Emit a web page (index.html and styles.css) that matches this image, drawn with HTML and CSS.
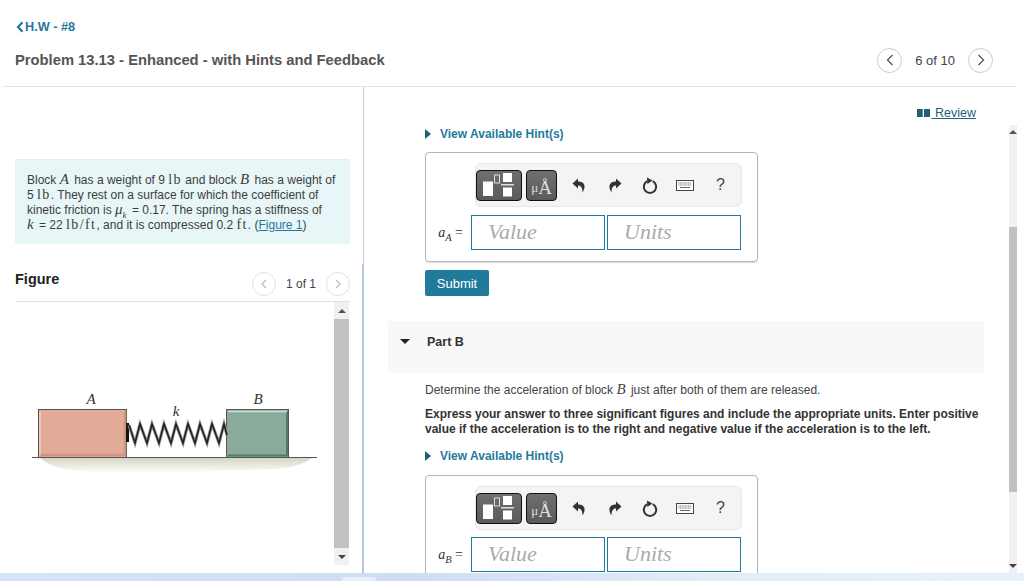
FILE: index.html
```html
<!DOCTYPE html>
<html lang="en">
<head>
<meta charset="utf-8">
<title>Problem 13.13</title>
<link rel="stylesheet" href="styles.css">
</head>
<body>
<div class="page">
  <svg width="0" height="0" class="defs">
    <symbol id="undo" viewBox="0 0 14 15"><path d="M6 0.5 L0.5 5.5 L6 10.500 V7.500 C9 7.500 10.500 9.500 10.500 14.500 C13.800 9.500 13.800 3.500 6 3.500 Z" fill="#333"/></symbol>
    <symbol id="redo" viewBox="0 0 14 15"><path d="M8 0.5 L13.500 5.500 L8 10.500 V7.500 C5 7.500 3.500 9.500 3.500 14.500 C0.200 9.500 0.200 3.500 8 3.500 Z" fill="#333"/></symbol>
    <symbol id="reset" viewBox="0 0 16 17"><path d="M5.300 4.200 A6.200 6.200 0 1 0 10.700 4.200" fill="none" stroke="#333" stroke-width="2"/><path d="M5 0.500 L10.500 3.600 L5.400 7 Z" fill="#333"/></symbol>
    <symbol id="keys" viewBox="0 0 18 11"><rect x=".5" y=".5" width="17" height="10" fill="#fff" stroke="#444"/><path d="M2.500 3h13M2.500 5h13" stroke="#666" stroke-dasharray="1 .6" fill="none"/><path d="M4 7.500h10" stroke="#666" fill="none"/></symbol>
    <symbol id="tmpl" viewBox="0 0 38 24"><rect x="3" y="8.500" width="10" height="14.500" fill="#fff"/><rect x="14.500" y="2" width="5" height="8" fill="none" stroke="#ddd"/><rect x="23" y="0" width="9" height="9" fill="#fff"/><rect x="21" y="11" width="13" height="1.500" fill="#ddd"/><rect x="23" y="14.500" width="9" height="9" fill="#fff"/></symbol>
    <symbol id="back" viewBox="0 0 8 12"><path d="M6.500 1.200 L2 6 L6.500 10.800" fill="none" stroke="#1f7a9c" stroke-width="2.200"/></symbol>
  </svg>

  <header class="top">
    <a class="back"><svg class="chev" width="8" height="12"><use href="#back"/></svg>H.W - #8</a>
    <div class="title-row">
      <h1 class="title">Problem 13.13 - Enhanced - with Hints and Feedback</h1>
      <nav class="pager">
        <span class="circle">
          <svg width="8" height="12" viewBox="0 0 8 12"><path d="M6.500 1 L1.500 6 L6.500 11" fill="none" stroke="#555" stroke-width="1.300"/></svg>
        </span>
        <span class="pager-text">6 of 10</span>
        <span class="circle">
          <svg width="8" height="12" viewBox="0 0 8 12"><path d="M1.500 1 L6.500 6 L1.500 11" fill="none" stroke="#555" stroke-width="1.300"/></svg>
        </span>
      </nav>
    </div>
  </header>

  <main class="main">
    <section class="left">
      <div class="intro">
        Block <i class="m">A</i> has a weight of 9 <span class="u">lb</span> and block <i class="m">B</i> has a weight of<br>
        5 <span class="u">lb</span>. They rest on a surface for which the coefficient of<br>
        kinetic friction is <i class="m">μ<sub>k</sub></i> = 0.17. The spring has a stiffness of<br>
        <i class="m">k</i> = 22 <span class="u">lb/ft</span>, and it is compressed 0.2 <span class="u">ft</span>. (<a class="link">Figure 1</a>)
      </div>
      <div class="fig-head">
        <h2 class="fig-title">Figure</h2>
        <div class="fig-pager">
          <span class="circle small">
            <svg width="7" height="10" viewBox="0 0 7 10"><path d="M6 1 L2 5 L6 9" fill="none" stroke="#bbb" stroke-width="1.200"/></svg>
          </span>
          <span class="fig-count">1 of 1</span>
          <span class="circle small">
            <svg width="7" height="10" viewBox="0 0 7 10"><path d="M1 1 L5 5 L1 9" fill="none" stroke="#bbb" stroke-width="1.200"/></svg>
          </span>
        </div>
      </div>
      <div class="fig-body">
        <div class="fig-canvas">
          <svg class="diagram" width="320" height="100" viewBox="0 0 320 100">
            <defs>
              <linearGradient id="shadow" x1="0" y1="0" x2="0" y2="1"><stop offset="0" stop-color="#d5d5c4"/><stop offset="1" stop-color="#fff"/></linearGradient>
            </defs>
            <path d="M40 75 H312 C296 86 280 87 230 87 C190 91 140 91 100 89 C72 90 50 84 40 75 Z" fill="url(#shadow)"/>
            <rect x="38.500" y="26.500" width="88" height="48" fill="#e1ab98" stroke="#555"/>
            <path d="M40 72 H125 V28" fill="none" stroke="#cf9581" stroke-width="2.500"/>
            <path d="M40 29 V72" fill="none" stroke="#f1d3c8" stroke-width="1.500"/>
            <rect x="226.500" y="26.500" width="62" height="48" fill="#8aaa9c" stroke="#555"/>
            <path d="M228 72.500 H287 V28" fill="none" stroke="#4f7c6c" stroke-width="2"/>
            <path d="M228 28.500 H287" stroke="#cfe0da" stroke-width="1.500"/>
            <path d="M32 74.500 H317" stroke="#555" stroke-width="1"/>
            <rect x="126" y="40" width="3" height="19" fill="#111"/>
            <path d="M129 42 L135 60 L140 41 L147 60 L152 41 L159 60 L164 41 L171 60 L176 41 L183 60 L188 41 L195 60 L200 41 L207 60 L212 41 L219 60 L224 41 L227 52" fill="none" stroke="#999" stroke-width="3.200"/>
            <path d="M129 42 L135 60 L140 41 L147 60 L152 41 L159 60 L164 41 L171 60 L176 41 L183 60 L188 41 L195 60 L200 41 L207 60 L212 41 L219 60 L224 41 L227 52" fill="none" stroke="#222" stroke-width="1.600"/>
            <text class="dlabel" x="91" y="21" text-anchor="middle">A</text>
            <text class="dlabel" x="176" y="33" text-anchor="middle">k</text>
            <text class="dlabel" x="258" y="21" text-anchor="middle">B</text>
          </svg>
        </div>
        <div class="vbar fig-vbar">
          <span class="arrow up"></span>
          <span class="thumb"></span>
          <span class="arrow down"></span>
        </div>
      </div>
    </section>

    <section class="right">
      <div class="right-body">
        <div class="review-row">
          <a class="review">
            <svg class="review-icon" width="13" height="8" viewBox="0 0 13 8"><path d="M0 0H5.700V8H0ZM7 0H13V8H7Z" fill="#1f6078"/></svg>
            <span class="review-text">&nbsp;Review</span>
          </a>
        </div>
        <div class="hint first-hint"><span class="tri"></span>View Available Hint(s)</div>

        <div class="answer">
          <div class="toolbar">
            <span class="tbtn wide"><svg width="38" height="24"><use href="#tmpl"/></svg></span>
            <span class="tbtn narrow">μ<span class="ang">Å</span></span>
            <svg class="ti t1" width="14" height="15"><use href="#undo"/></svg>
            <svg class="ti t2" width="14" height="15"><use href="#redo"/></svg>
            <svg class="ti t3" width="16" height="17"><use href="#reset"/></svg>
            <svg class="ti t4" width="18" height="11"><use href="#keys"/></svg>
            <span class="ti t5">?</span>
          </div>
          <div class="answer-row">
            <span class="var"><i>a<sub>A</sub></i> =</span>
            <span class="field">Value</span>
            <span class="field">Units</span>
          </div>
        </div>
        <button class="submit">Submit</button>

        <div class="part">
          <span class="part-tri"></span>
          <h3 class="part-title">Part B</h3>
        </div>

        <p class="q">Determine the acceleration of block <i class="m">B</i> just after both of them are released.</p>
        <p class="q bold">Express your answer to three significant figures and include the appropriate units. Enter positive value if the acceleration is to the right and negative value if the acceleration is to the left.</p>
        <div class="hint second-hint"><span class="tri"></span>View Available Hint(s)</div>

        <div class="answer">
          <div class="toolbar">
            <span class="tbtn wide"><svg width="38" height="24"><use href="#tmpl"/></svg></span>
            <span class="tbtn narrow">μ<span class="ang">Å</span></span>
            <svg class="ti t1" width="14" height="15"><use href="#undo"/></svg>
            <svg class="ti t2" width="14" height="15"><use href="#redo"/></svg>
            <svg class="ti t3" width="16" height="17"><use href="#reset"/></svg>
            <svg class="ti t4" width="18" height="11"><use href="#keys"/></svg>
            <span class="ti t5">?</span>
          </div>
          <div class="answer-row">
            <span class="var"><i>a<sub>B</sub></i> =</span>
            <span class="field">Value</span>
            <span class="field">Units</span>
          </div>
        </div>
      </div>
      <div class="vbar main-vbar">
        <span class="arrow up"></span>
        <span class="track-top"></span>
        <span class="thumb"></span>
        <span class="track-bottom"></span>
        <span class="arrow down"></span>
      </div>
    </section>
  </main>
  <footer class="strip"><span class="strip-tab"></span></footer>
</div>
</body>
</html>
```
FILE: styles.css
```css
* { box-sizing: border-box; }
html, body { margin: 0; padding: 0; }
body { width: 1024px; height: 581px; overflow: hidden; background: #fff; font-family: "Liberation Sans", Arial, sans-serif; color: #333; }
.page { width: 1024px; height: 581px; display: flex; flex-direction: column; overflow: hidden; }
.defs { display: block; height: 0; }

/* Header */
.top { height: 87px; flex: none; margin: 0 7px 0 3px; padding: 19px 0 0 12px; border-bottom: 1px solid #e1e3e6; }
.back { display: flex; align-items: center; font-size: 12.700px; line-height: 16px; font-weight: bold; color: #1f7a9c; }
.chev { margin: 0 1px 0 1px; }
.title-row { display: flex; justify-content: space-between; align-items: center; margin-top: 8px; height: 34px; }
.title { margin: 0; font-size: 14.750px; line-height: 18px; font-weight: bold; color: #555; }
.pager { display: flex; align-items: center; margin-right: 24px; }
.pager-text { font-size: 13px; color: #444; margin: 0 13px; }
.circle { width: 25px; height: 25px; border: 1px solid #ccc; border-radius: 50%; display: flex; align-items: center; justify-content: center; }
.circle.small { width: 24px; height: 24px; border-color: #e2e2e2; }

/* Main */
.main { flex: 1; min-height: 0; display: flex; }
.left { width: 364px; flex: none; padding: 72px 14px 0 15px; display: flex; flex-direction: column; background: linear-gradient(#c8ccd4, #c8ccd4) right top / 1px 177px no-repeat, linear-gradient(#b4c8e2, #b4c8e2) right bottom / 2px calc(100% - 177px) no-repeat; }
.intro { height: 85px; padding: 13px 12px 0; background: #e8f6f7; border-top: 1px solid #e3eeee; font-size: 12px; line-height: 15px; color: #3d3d3d; white-space: nowrap; }
.m, .u { font-family: "Liberation Serif", serif; font-size: 14px; line-height: 0; }
.m { font-size: 15px; margin-right: 2px; }
.u { letter-spacing: 1.400px; }
.m sub { font-size: 9px; line-height: 0; }
.link { color: #1f7a9c; text-decoration: underline; }
.fig-head { display: flex; justify-content: space-between; align-items: center; height: 58px; padding-top: 13px; border-bottom: 1px solid #dfe1e4; }
.fig-title { margin: 0 0 1px; font-size: 14.500px; font-weight: bold; color: #222; }
.fig-pager { display: flex; align-items: center; margin: 9px 0 0 0; }
.fig-count { font-size: 12px; color: #444; margin: 0 10px; }
.fig-body { flex: 1; min-height: 0; display: flex; justify-content: space-between; padding-bottom: 8px; }
.fig-canvas { flex: 1; padding-top: 81px; }
.diagram { display: block; margin-left: -15px; }
.dlabel { font-family: "Liberation Serif", serif; font-style: italic; font-size: 15px; fill: #333; }
.vbar { display: flex; flex-direction: column; flex: none; background: #f1f1f1; }
.fig-vbar { width: 15px; margin-right: 1px; }
.fig-vbar .thumb { flex: 1; background: #c1c1c1; margin: 0; }
.arrow { flex: none; height: 17px; display: flex; align-items: center; justify-content: center; }
.arrow::before { content: ""; width: 0; height: 0; border-left: 4px solid transparent; border-right: 4px solid transparent; }
.arrow.up::before { border-bottom: 4px solid #555; }
.arrow.down::before { border-top: 4px solid #444; }

/* Right */
.right { flex: 1; min-width: 0; display: flex; position: relative; }
.right-body { width: 645px; flex: none; padding: 0 0 0 24px; overflow: hidden; }
.review-row { display: flex; justify-content: flex-end; height: 33px; padding: 19px 33px 0 0; }
.review { font-size: 12.500px; line-height: 14px; color: #1f6078; display: flex; align-items: center; gap: 0; }
.review-icon { margin-right: 2px; }
.review-text { text-decoration: underline; }
.hint { display: flex; align-items: center; font-size: 12px; font-weight: bold; color: #1f7a9c; line-height: 14px; margin-left: 37px; }
.first-hint { margin-top: 6.500px; height: 14px; }
.tri { width: 0; height: 0; border-top: 5px solid transparent; border-bottom: 5px solid transparent; border-left: 6px solid #1f6078; margin-right: 9px; }

.answer { width: 333px; margin: 11.500px 0 0 37px; border: 1px solid #b5b5b5; border-radius: 4px; padding: 10px 15px 11px 0; box-shadow: 0 1px 1px #ddd; height: 110px; }
.toolbar { display: flex; align-items: center; width: 267px; height: 44px; margin-left: 49px; background: #f4f4f4; border: 1px solid #e8e8e8; border-radius: 6px; padding: 0; }
.tbtn { height: 31px; display: flex; align-items: center; justify-content: center; border: 1px solid #111; border-radius: 4px; background: linear-gradient(#6f6f6f, #5a5a5a); }
.tbtn.wide { width: 46px; }
.tbtn.narrow { width: 31px; margin-left: 4px; color: #ddd; font-family: "Liberation Serif", serif; font-size: 13px; align-items: flex-end; padding-bottom: 4px; line-height: 16px; }
.ang { font-size: 19px; }
.ti { flex: none; display: block; }
.t1 { margin-left: 15px; }
.t2 { margin-left: 22px; }
.t3 { margin-left: 20px; }
.t4 { margin-left: 18px; }
.t5 { margin-left: 22px; font-size: 16px; color: #444; }
.answer-row { display: flex; align-items: center; margin-top: 8px; }
.var { width: 45px; text-align: right; padding-right: 8px; font-size: 14px; color: #333; font-family: "Liberation Serif", serif; white-space: nowrap; }
.var sub { font-size: 10.500px; line-height: 0; }
.field { width: 134px; height: 35px; border: 1px solid #1f7a9c; padding-left: 16px; margin-right: 2px; font-family: "Liberation Serif", serif; font-style: italic; font-size: 22px; line-height: 31px; color: #aaa; }
.field + .field { margin-right: 0; }
.submit { display: block; width: 64px; height: 26px; margin: 8px 0 0 37px; padding: 0; border: 0; border-radius: 2px; background: #1f7a9c; color: #fff; font-family: "Liberation Sans", Arial, sans-serif; font-size: 13px; }
.part { width: 596px; height: 52px; margin-top: 25px; background: #f8f8f8; display: flex; align-items: flex-start; padding: 14px 0 0 12px; }
.part-tri { width: 0; height: 0; border-left: 5.500px solid transparent; border-right: 5.500px solid transparent; border-top: 5.500px solid #222; margin-top: 4px; }
.part-title { margin: 0 0 0 17px; font-size: 12.500px; line-height: 14px; font-weight: bold; color: #333; }
.q { margin: 10px 0 0 37px; width: 558px; font-size: 12px; line-height: 15px; color: #444; }
.q.bold { margin-top: 9px; font-weight: bold; color: #333; line-height: 15px; }
.second-hint { margin-top: 12px; height: 14px; }
.second-hint + .answer { margin-top: 12px; }
.second-hint + .answer .answer-row { margin-top: 7px; }

.main-vbar { width: 8px; margin: 38px 0 0 0; position: absolute; left: 645px; top: 0; bottom: 0; }
.main-vbar .arrow { height: 14px; }
.track-top { height: 88px; flex: none; }
.main-vbar .thumb { flex: none; height: 265px; background: #c1c1c1; }
.track-bottom { flex: 1; }

/* Bottom strip */
.strip { height: 8px; flex: none; padding: 4px 0 0 342px; background: linear-gradient(90deg, #d7e3f7, #d0dcf3 40%, #e2edf8 70%, #e8f1fa); }
.strip-tab { display: block; width: 34px; height: 4px; background: #e9eefa; border-radius: 3px 3px 0 0; }
```
